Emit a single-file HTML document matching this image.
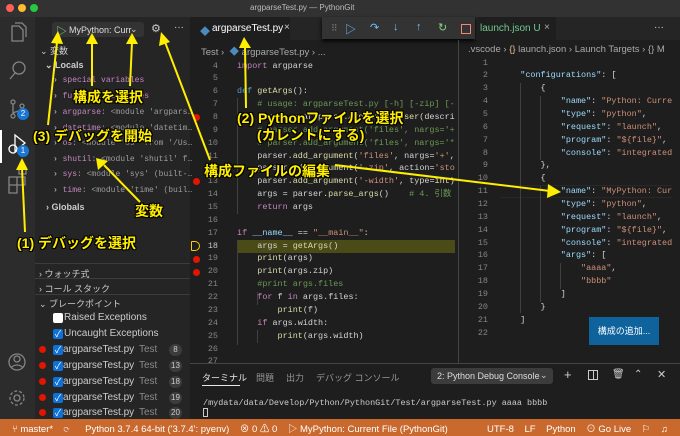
<!DOCTYPE html>
<html><head><meta charset="utf-8"><style>
*{margin:0;padding:0;box-sizing:border-box}
body{width:680px;height:436px;overflow:hidden;background:#1e1e1e;font-family:"Liberation Sans","Noto Sans CJK JP",sans-serif;color:#ccc;position:relative;font-size:10px}
.a{position:absolute;white-space:pre}
.m{font-family:"Liberation Mono","Noto Sans CJK JP",monospace}
.code{position:absolute;font-family:"Liberation Mono","Noto Sans CJK JP",monospace;font-size:8.45px;line-height:12.86px;color:#d4d4d4;white-space:pre}
.k{color:#c586c0}.f{color:#dcdcaa}.s{color:#ce9178}.c{color:#6a9955}.v{color:#9cdcfe}.b{color:#569cd6}
.ln{position:absolute;font-family:"Liberation Mono",monospace;font-size:8.45px;line-height:12.86px;color:#858585;text-align:right;white-space:pre}
.sv{font-family:"Liberation Mono",monospace;font-size:8px;color:#9d9d9d}
.sv i{font-style:normal;color:#c586c0}
.dot{position:absolute;width:7px;height:7px;border-radius:50%;background:#e51400}
.cb{position:absolute;width:10px;height:10px;border-radius:2px;background:#0e70d9;color:#fff;font-size:9px;line-height:10px;text-align:center}
.bd{position:absolute;width:13px;height:12px;border-radius:6px;background:#3c3c3c;color:#ccc;font-size:8px;line-height:12px;text-align:center}
.ann{position:absolute;white-space:pre;color:#ffee00;font-weight:bold;font-size:14px;font-family:"Liberation Sans","Noto Sans CJK JP",sans-serif;text-shadow:1px 1px 0 #000,-1px -1px 0 #000,1px -1px 0 #000,-1px 1px 0 #000,0 1px 0 #000,1px 0 0 #000,0 -1px 0 #000,-1px 0 0 #000}
.g{position:absolute;width:1px;background:#404040}
</style></head><body>
<div class="a" style="left:0;top:0;width:680px;height:17px;background:#323233"></div>
<div class="a" style="left:6px;top:4px;width:8px;height:8px;border-radius:50%;background:#fe5f57"></div>
<div class="a" style="left:18px;top:4px;width:8px;height:8px;border-radius:50%;background:#febc2e"></div>
<div class="a" style="left:30px;top:4px;width:8px;height:8px;border-radius:50%;background:#28c840"></div>
<div class="a" style="left:250px;top:3px;font-size:8px;color:#bbb">argparseTest.py — PythonGit</div>
<div class="a" style="left:0;top:17px;width:35px;height:402px;background:#2c2c2c"></div>
<div class="a" style="left:0;top:130px;width:2px;height:33px;background:#fff"></div>
<svg class="a" style="left:0;top:17px" width="35" height="402" fill="none" stroke="#858585" stroke-width="1.3">
<path d="M12 9h7l4 4v11h-11z M15 6h7l4 4v10"/>
<circle cx="19" cy="51" r="6"/><path d="M15 56l-5 6"/>
<circle cx="13" cy="85" r="2"/><circle cx="13" cy="99" r="2"/><circle cx="22" cy="89" r="2"/><path d="M13 87v10M22 91c0 4-9 3-9 6"/>
<path d="M15 118l10 8-10 8z" stroke="#fff"/><circle cx="13" cy="132" r="4" stroke="#fff"/>
<path d="M9 160h8v8h-8zM17 160h8v8h-8zM9 168h8v8h-8zM19 150h7v7h-7z"/>
<circle cx="17" cy="345" r="8"/><circle cx="17" cy="342" r="3"/><path d="M11 351c3-4 9-4 12 0"/>
<circle cx="17" cy="381" r="3"/><circle cx="17" cy="381" r="7" stroke-dasharray="3 2"/>
</svg>
<div class="a" style="left:17px;top:108px;width:12px;height:12px;border-radius:6px;background:#1a78d4;color:#fff;font-size:8px;text-align:center;line-height:12px">2</div>
<div class="a" style="left:17px;top:145px;width:12px;height:12px;border-radius:6px;background:#1a78d4;color:#fff;font-size:8px;text-align:center;line-height:12px">1</div>
<div class="a" style="left:35px;top:17px;width:155px;height:402px;background:#252526"></div>
<div class="a" style="left:52px;top:22px;width:92px;height:15px;background:#333;border-radius:3px"></div>
<div class="a" style="left:56px;top:23px;color:#89d185;font-size:11px">▷</div>
<div class="a" style="left:69px;top:25px;font-size:9px;color:#ddd">MyPython: Curr</div>
<div class="a" style="left:130px;top:24px;font-size:9px;color:#ccc">⌄</div>
<div class="a" style="left:151px;top:22px;font-size:11px;color:#ccc">⚙</div>
<div class="a" style="left:174px;top:22px;font-size:10px;color:#ccc">···</div>
<div class="a" style="left:40px;top:44px;font-size:9px;color:#ccc">⌄ 変数</div>
<div class="a" style="left:45px;top:60px;font-size:9px;color:#ccc;font-weight:bold">⌄ Locals</div>
<div class="a sv" style="left:53px;top:76px"><span style="color:#ccc">›</span> <i>special variables</i></div>
<div class="a sv" style="left:53px;top:92px"><span style="color:#ccc">›</span> <i>function variables</i></div>
<div class="a sv" style="left:53px;top:108px"><span style="color:#ccc">›</span> <i>argparse</i>: &lt;module 'argpars…</div>
<div class="a sv" style="left:53px;top:124px"><span style="color:#ccc">›</span> <i>datetime</i>: &lt;module 'datetim…</div>
<div class="a sv" style="left:53px;top:139px"><span style="color:#ccc">›</span> <i>os</i>: &lt;module 'os' from '/Us…</div>
<div class="a sv" style="left:53px;top:155px"><span style="color:#ccc">›</span> <i>shutil</i>: &lt;module 'shutil' f…</div>
<div class="a sv" style="left:53px;top:170px"><span style="color:#ccc">›</span> <i>sys</i>: &lt;module 'sys' (built-…</div>
<div class="a sv" style="left:53px;top:186px"><span style="color:#ccc">›</span> <i>time</i>: &lt;module 'time' (buil…</div>
<div class="a" style="left:46px;top:202px;font-size:9px;color:#ccc;font-weight:bold">› Globals</div>
<div class="a" style="left:35px;top:263px;width:155px;height:1px;background:#3c3c3c"></div>
<div class="a" style="left:35px;top:278px;width:155px;height:1px;background:#3c3c3c"></div>
<div class="a" style="left:35px;top:294px;width:155px;height:1px;background:#3c3c3c"></div>
<div class="a" style="left:39px;top:267px;font-size:9px;color:#ccc">› ウォッチ式</div>
<div class="a" style="left:39px;top:282px;font-size:9px;color:#ccc">› コール スタック</div>
<div class="a" style="left:39px;top:297px;font-size:9px;color:#ccc">⌄ ブレークポイント</div>
<div class="a" style="left:53px;top:313px;width:10px;height:10px;background:#fff;border-radius:2px"></div>
<div class="a" style="left:64px;top:312px;font-size:10px;color:#ccc">Raised Exceptions</div>
<div class="cb" style="left:53px;top:329px">✓</div>
<div class="a" style="left:64px;top:328px;font-size:10px;color:#ccc">Uncaught Exceptions</div>
<div class="dot" style="left:39px;top:346px"></div><div class="cb" style="left:53px;top:345px">✓</div><div class="a" style="left:63px;top:344px;font-size:10px;color:#ccc">argparseTest.py</div><div class="a" style="left:139px;top:344px;font-size:10px;color:#8b8b8b">Test</div><div class="bd" style="left:169px;top:344px">8</div>
<div class="dot" style="left:39px;top:362px"></div><div class="cb" style="left:53px;top:361px">✓</div><div class="a" style="left:63px;top:360px;font-size:10px;color:#ccc">argparseTest.py</div><div class="a" style="left:139px;top:360px;font-size:10px;color:#8b8b8b">Test</div><div class="bd" style="left:169px;top:360px">13</div>
<div class="dot" style="left:39px;top:378px"></div><div class="cb" style="left:53px;top:377px">✓</div><div class="a" style="left:63px;top:376px;font-size:10px;color:#ccc">argparseTest.py</div><div class="a" style="left:139px;top:376px;font-size:10px;color:#8b8b8b">Test</div><div class="bd" style="left:169px;top:376px">18</div>
<div class="dot" style="left:39px;top:394px"></div><div class="cb" style="left:53px;top:393px">✓</div><div class="a" style="left:63px;top:392px;font-size:10px;color:#ccc">argparseTest.py</div><div class="a" style="left:139px;top:392px;font-size:10px;color:#8b8b8b">Test</div><div class="bd" style="left:169px;top:392px">19</div>
<div class="dot" style="left:39px;top:409px"></div><div class="cb" style="left:53px;top:408px">✓</div><div class="a" style="left:63px;top:407px;font-size:10px;color:#ccc">argparseTest.py</div><div class="a" style="left:139px;top:407px;font-size:10px;color:#8b8b8b">Test</div><div class="bd" style="left:169px;top:407px">20</div>
<div class="a" style="left:190px;top:17px;width:490px;height:23px;background:#252526"></div>
<div class="a" style="left:190px;top:17px;width:100px;height:23px;background:#1e1e1e"></div>
<div class="a" style="left:200px;top:23px;font-size:10px;color:#4b8bbe">◆</div>
<div class="a" style="left:212px;top:23px;font-size:10px;color:#fff">argparseTest.py</div>
<div class="a" style="left:284px;top:22px;font-size:10px;color:#ccc">×</div>
<div class="a" style="left:322px;top:17px;width:153px;height:22px;background:#333;box-shadow:0 2px 4px #000"></div>
<div class="a" style="left:331px;top:23px;font-size:9px;color:#777">⠿</div>
<div class="a" style="left:345px;top:21px;font-size:11px;color:#75beff">▷</div>
<div class="a" style="left:370px;top:21px;font-size:11px;color:#75beff">↷</div>
<div class="a" style="left:393px;top:21px;font-size:11px;color:#75beff">↓</div>
<div class="a" style="left:416px;top:21px;font-size:11px;color:#75beff">↑</div>
<div class="a" style="left:438px;top:21px;font-size:11px;color:#89d185">↻</div>
<div class="a" style="left:461px;top:24px;width:10px;height:10px;border:1.5px solid #f48771"></div>
<div class="a" style="left:478px;top:17px;width:78px;height:23px;background:#1e1e1e"></div>
<div class="a" style="left:480px;top:23px;font-size:10px;color:#73c991">launch.json U</div>
<div class="a" style="left:544px;top:22px;font-size:10px;color:#aaa">×</div>
<div class="a" style="left:654px;top:22px;font-size:10px;color:#ccc">···</div>
<div class="a" style="left:201px;top:44px;font-size:9.5px;color:#a9a9a9">Test ›  <span style="color:#4b8bbe">◆</span> argparseTest.py › ...</div>
<div class="a" style="left:468px;top:44px;font-size:9.5px;color:#a9a9a9">.vscode › <span style="color:#e2c08d">{}</span> launch.json › Launch Targets › {} M</div>
<div class="a" style="left:458px;top:40px;width:1px;height:323px;background:#444"></div>
<div class="a" style="left:237px;top:240px;width:218px;height:13px;background:#4b4b18"></div>
<div class="g" style="left:237px;top:98px;height:116px"></div>
<div class="g" style="left:237px;top:240px;height:105px"></div>
<div class="g" style="left:257px;top:292px;height:13px"></div>
<div class="g" style="left:257px;top:330px;height:13px"></div>
<div class="ln" style="left:196px;top:59.6px;width:22px">4
5
6
7
8
9
10
11
12
13
14
15
16
17
<span style="color:#c6c6c6">18</span>
19
20
21
22
23
24
25
26
27</div>
<div class="dot" style="left:193px;top:114px"></div>
<div class="dot" style="left:193px;top:178px"></div>
<div class="dot" style="left:193px;top:256px"></div>
<div class="dot" style="left:193px;top:269px"></div>
<div class="a" style="left:191px;top:241px;width:9px;height:10px;border:1.5px solid #ffcc00;border-radius:1px 5px 5px 1px"></div>
<div class="code" style="left:237px;top:59.6px;width:218px;overflow:hidden"><span class="k">import</span> argparse

<span class="b">def</span> <span class="f">getArgs</span>():
    <span class="c"># usage: argparseTest.py [-h] [-zip] [-w</span>
    parser = argparse.<span class="f">ArgumentParser</span>(descri
    <span class="c"># parser.add_argument('files', nargs='+'</span>
    <span class="c"># parser.add_argument('files', nargs='*'</span>
    parser.<span class="f">add_argument</span>(<span class="s">'files'</span>, nargs=<span class="s">'+'</span>,
    parser.<span class="f">add_argument</span>(<span class="s">'-zip'</span>, action=<span class="s">'sto</span>
    parser.<span class="f">add_argument</span>(<span class="s">'-width'</span>, type=<span class="f">int</span>)
    args = parser.<span class="f">parse_args</span>()    <span class="c"># 4. 引数</span>
    <span class="k">return</span> args

<span class="k">if</span> <span class="v">__name__</span> == <span class="s">"__main__"</span>:
    args = <span class="f">getArgs</span>()
    <span class="f">print</span>(args)
    <span class="f">print</span>(args.zip)
    <span class="c">#print args.files</span>
    <span class="k">for</span> f <span class="k">in</span> args.files:
        <span class="f">print</span>(f)
    <span class="k">if</span> args.width:
        <span class="f">print</span>(args.width)</div>
<div class="ln" style="left:466px;top:56.6px;width:22px">1
2
3
4
5
6
7
8
9
10
11
12
13
14
15
16
17
18
19
20
21
22</div>
<div class="a" style="left:500px;top:185px;width:172px;height:13px;border-top:1px solid #282828;border-bottom:1px solid #282828"></div>
<div class="g" style="left:520px;top:83px;height:230px"></div>
<div class="g" style="left:540px;top:96px;height:64px"></div>
<div class="g" style="left:540px;top:186px;height:116px"></div>
<div class="g" style="left:560px;top:263px;height:26px"></div>
<div class="code" style="left:500px;top:56.6px;width:172px;overflow:hidden">
    <span class="v">"configurations"</span>: [
        {
            <span class="v">"name"</span>: <span class="s">"Python: Current File"</span>,
            <span class="v">"type"</span>: <span class="s">"python"</span>,
            <span class="v">"request"</span>: <span class="s">"launch"</span>,
            <span class="v">"program"</span>: <span class="s">"${file}"</span>,
            <span class="v">"console"</span>: <span class="s">"integratedTerminal"</span>
        },
        {
            <span class="v">"name"</span>: <span class="s">"MyPython: Current File"</span>,
            <span class="v">"type"</span>: <span class="s">"python"</span>,
            <span class="v">"request"</span>: <span class="s">"launch"</span>,
            <span class="v">"program"</span>: <span class="s">"${file}"</span>,
            <span class="v">"console"</span>: <span class="s">"integratedTerminal"</span>,
            <span class="v">"args"</span>: [
                <span class="s">"aaaa"</span>,
                <span class="s">"bbbb"</span>
            ]
        }
    ]
</div>
<div class="a" style="left:589px;top:317px;width:70px;height:28px;background:#0e639c;color:#fff;font-size:9px;text-align:center;line-height:28px">構成の追加...</div>
<div class="a" style="left:190px;top:363px;width:490px;height:56px;background:#1e1e1e;border-top:1px solid #444"></div>
<div class="a" style="left:202px;top:371px;font-size:9px;color:#e7e7e7">ターミナル</div>
<div class="a" style="left:202px;top:385px;width:38px;height:1px;background:#e7e7e7"></div>
<div class="a" style="left:256px;top:371px;font-size:9px;color:#969696">問題</div>
<div class="a" style="left:286px;top:371px;font-size:9px;color:#969696">出力</div>
<div class="a" style="left:316px;top:371px;font-size:9px;color:#969696">デバッグ コンソール</div>
<div class="a" style="left:431px;top:368px;width:122px;height:16px;background:#3c3c3c;border-radius:3px"></div>
<div class="a" style="left:437px;top:371px;font-size:9px;color:#ddd">2: Python Debug Console</div>
<div class="a" style="left:540px;top:370px;font-size:9px;color:#ccc">⌄</div>
<div class="a" style="left:564px;top:367px;font-size:13px;color:#ccc">+</div>
<div class="a" style="left:588px;top:370px;width:10px;height:10px;border:1px solid #ccc"></div>
<div class="a" style="left:593px;top:370px;width:1px;height:10px;background:#ccc"></div>
<div class="a" style="left:612px;top:369px;font-size:10px;color:#ccc">🗑</div>
<div class="a" style="left:634px;top:369px;font-size:10px;color:#ccc">⌃</div>
<div class="a" style="left:657px;top:368px;font-size:11px;color:#ccc">✕</div>
<div class="a m" style="left:203px;top:398px;font-size:8.45px;color:#ccc">/mydata/data/Develop/Python/PythonGit/Test/argparseTest.py aaaa bbbb</div>
<div class="a" style="left:203px;top:408px;width:5px;height:9px;border:1px solid #ccc"></div>
<div class="a" style="left:0;top:419px;width:680px;height:17px;background:#c9692e"></div>
<div class="a" style="left:12px;top:421px;font-size:9.5px;color:#fff">⑂ master*    ⟳      Python 3.7.4 64-bit ('3.7.4': pyenv)    ⊗ 0 ⚠ 0    ▷ MyPython: Current File (PythonGit)</div>
<div class="a" style="left:487px;top:421px;font-size:9.5px;color:#fff">UTF-8    LF    Python    ⊙ Go Live    ⚐    ♫</div>
<svg class="a" style="left:0;top:0" width="680" height="436" fill="#ffee00" stroke="#ffee00" stroke-width="2">
<line x1="92" y1="86" x2="92" y2="42"/><polygon points="86,44 98,44 92,33" stroke="none"/>
<line x1="130" y1="86" x2="132" y2="42"/><polygon points="126,44 138,44 132,33" stroke="none"/>
<line x1="48" y1="125" x2="57" y2="42"/><polygon points="51,43 63,44 58,31" stroke="none"/>
<line x1="140" y1="202" x2="104" y2="165"/><polygon points="98,170 108,161 96,158" stroke="none"/>
<line x1="25" y1="232" x2="22" y2="168"/><polygon points="16,170 28,170 22,158" stroke="none"/>
<line x1="246" y1="108" x2="245" y2="47"/><polygon points="239,48 251,48 244,37" stroke="none"/>
<line x1="210" y1="160" x2="165" y2="42"/><polygon points="159,46 170,42 161,32" stroke="none"/>
<line x1="335" y1="165" x2="550" y2="191"/><polygon points="548,184 547,198 561,192" stroke="none"/>
</svg>
<div class="ann" style="left:73px;top:87px">構成を選択</div>
<div class="ann" style="left:33px;top:126px">(3) デバッグを開始</div>
<div class="ann" style="left:135px;top:201px">変数</div>
<div class="ann" style="left:17px;top:233px">(1) デバッグを選択</div>
<div class="ann" style="left:237px;top:108px">(2) Pythonファイルを選択</div>
<div class="ann" style="left:257px;top:125px">(カレントにする)</div>
<div class="ann" style="left:204px;top:161px">構成ファイルの編集</div>
</body></html>
